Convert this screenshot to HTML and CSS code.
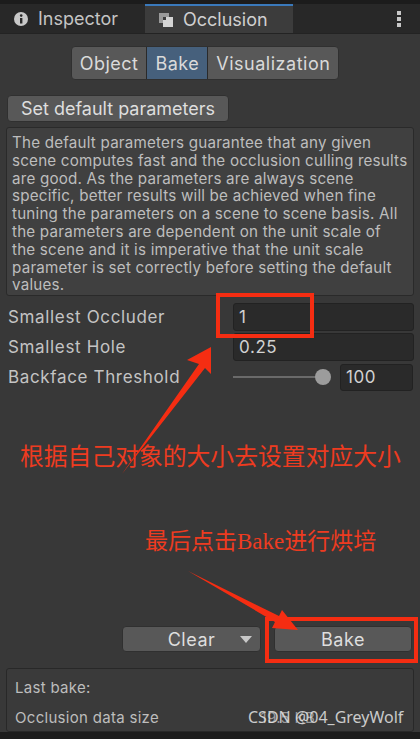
FILE: index.html
```html
<!DOCTYPE html>
<html lang="zh-CN">
<head>
<meta charset="UTF-8">
<meta name="viewport" content="width=device-width, initial-scale=1.0">
<title>Occlusion</title>
<link rel="stylesheet" href="styles.css">
</head>
<body>
<div class="window">
  <div class="tabs">
    <div class="tab">
      <svg class="tab-icon" width="16" height="16" viewBox="0 0 16 16"><circle cx="8" cy="8" r="7" fill="#c8c8c8"/><rect x="7" y="7" width="2.4" height="5.5" fill="#282828"/><circle cx="8.2" cy="4.6" r="1.3" fill="#282828"/></svg>
      <span>Inspector</span>
    </div>
    <div class="tab active">
      <svg class="tab-icon" width="16" height="16" viewBox="0 0 16 16"><rect x="1" y="1" width="10" height="10" fill="#9a9a9a"/><rect x="5" y="5" width="10" height="10" fill="#d4d4d4"/><rect x="5" y="5" width="3" height="3" fill="#3c3c3c"/></svg>
      <span>Occlusion</span>
    </div>
    <div class="tab-menu"><i></i><i></i><i></i></div>
  </div>

  <div class="content">
    <div class="seg">
      <div class="seg-item">Object</div>
      <div class="seg-item on">Bake</div>
      <div class="seg-item">Visualization</div>
    </div>

    <div class="btn default-btn">Set default parameters</div>

    <div class="help">The default parameters guarantee that any given scene computes fast and the occlusion culling results are good. As the parameters are always scene specific, better results will be achieved when fine tuning the parameters on a scene to scene basis. All the parameters are dependent on the unit scale of the scene and it is imperative that the unit scale parameter is set correctly before setting the default values.</div>

    <div class="row">
      <div class="label">Smallest Occluder</div>
      <div class="field">1</div>
    </div>
    <div class="row">
      <div class="label">Smallest Hole</div>
      <div class="field">0.25</div>
    </div>
    <div class="row">
      <div class="label">Backface Threshold</div>
      <div class="slider"><div class="track"></div><div class="thumb"></div></div>
      <div class="field small">100</div>
    </div>

    <div class="spacer"></div>

    <div class="actions">
      <div class="btn clear-btn"><span>Clear</span><span class="caret"></span></div>
      <div class="btn bake-btn">Bake</div>
    </div>

    <div class="stats">
      <div class="stat">Last bake:</div>
      <div class="stat"><span>Occlusion data size</span><span class="stat-val">19.5 KB</span></div>
    </div>
  </div>
  <div class="foot"></div>

  <!-- annotations drawn over the screenshot -->
  <div class="mark mark-field"></div>
  <div class="mark mark-bake"></div>
  <div class="note note-size">根据自己对象的大小去设置对应大小</div>
  <div class="note note-bake">最后点击<span class="serif">Bake</span>进行烘培</div>
  <svg class="arrows" width="420" height="739" viewBox="0 0 420 739">
    <polygon points="122,474 205,368 211,374 211,347 187,360 199,364" fill="#f52d12"/>
    <polygon points="188,571 275,622 272,628 298,630 282,610 279,616" fill="#f52d12"/>
  </svg>
  <div class="watermark">CSDN @04_GreyWolf</div>
</div>
</body>
</html>
```

FILE: styles.css
```css
* {
  box-sizing: border-box;
}
body {
  margin: 0;
  background-color: #383838;
  font-family: Inter, "Noto Sans", sans-serif;
  color: #c4c4c4;
}
.window {
  position: relative;
  width: 420px;
  height: 739px;
  display: flex;
  flex-direction: column;
  overflow: hidden;
}
.tabs {
  display: flex;
  align-items: stretch;
  height: 34px;
  background-color: #282828;
  border-top: 4px solid #1c1c1c;
  border-bottom: 1px solid #232323;
}
.tab {
  display: flex;
  align-items: center;
  gap: 9px;
  padding: 0 12px 0 13px;
  width: 145px;
  font-size: 18px;
  color: #c4c4c4;
}
.tab.active {
  width: 148px;
  background-color: #3c3c3c;
  border-top: 2px solid #3a79bb;
  padding-left: 13px;
  color: #d0d0d0;
}
.tab-icon {
  flex: none;
}
.tab-menu {
  margin-left: auto;
  margin-right: 19px;
  display: flex;
  flex-direction: column;
  justify-content: center;
  gap: 2px;
}
.tab-menu i {
  display: block;
  width: 4px;
  height: 4px;
  background-color: #c8c8c8;
}
.content {
  flex: 1;
  display: flex;
  flex-direction: column;
  padding: 0 6px 0 6px;
}
.seg {
  align-self: center;
  display: flex;
  margin-top: 12px;
  margin-right: 10px;
  height: 34px;
  border-radius: 4px;
  background-color: #585858;
  border: 1px solid #303030;
  overflow: hidden;
}
.seg-item {
  display: flex;
  align-items: center;
  padding: 0 8px;
  font-size: 18px;
  letter-spacing: 0.5px;
  color: #dadada;
}
.seg-item.on {
  background-color: #46607c;
  border-left: 1px solid #2a2a2a;
  border-right: 1px solid #2a2a2a;
}
.btn {
  display: flex;
  align-items: center;
  justify-content: center;
  background-color: #585858;
  border: 1px solid #303030;
  border-radius: 4px;
  color: #dedede;
}
.default-btn {
  align-self: flex-start;
  margin: 15px 0 0 1px;
  width: 222px;
  height: 27px;
  font-size: 18px;
}
.help {
  margin-top: 5px;
  height: 169px;
  padding: 6px 5px;
  background-color: #404040;
  border: 1px solid #2a2a2a;
  border-radius: 3px;
  font-size: 15.2px;
  line-height: 17.8px;
  letter-spacing: 0.2px;
  color: #bdbdbd;
}
.row {
  display: flex;
  align-items: center;
  height: 30px;
}
.help + .row {
  margin-top: 6px;
}
.label {
  width: 227px;
  padding-left: 2px;
  font-size: 17px;
  letter-spacing: 0.65px;
  color: #c4c4c4;
}
.field {
  flex: 1;
  height: 28px;
  display: flex;
  align-items: center;
  padding-left: 5px;
  background-color: #2a2a2a;
  border: 1px solid #222;
  border-radius: 3px;
  font-size: 17px;
  letter-spacing: 0.6px;
  color: #d2d2d2;
}
.field.small {
  flex: none;
  width: 73px;
  height: 27px;
}
.slider {
  position: relative;
  width: 107px;
  height: 28px;
}
.track {
  position: absolute;
  left: 0;
  right: 16px;
  top: 13px;
  height: 2px;
  background-color: #6a6a6a;
}
.thumb {
  position: absolute;
  left: 82px;
  top: 6px;
  width: 16px;
  height: 16px;
  border-radius: 50%;
  background-color: #9c9c9c;
}
.spacer {
  flex: 1;
}
.actions {
  display: flex;
  justify-content: flex-end;
  gap: 13px;
  padding-right: 2px;
}
.clear-btn {
  width: 139px;
  height: 26px;
  font-size: 18px;
  letter-spacing: 0.5px;
  position: relative;
}
.caret {
  position: absolute;
  right: 8px;
  top: 9px;
  width: 0;
  height: 0;
  border-left: 6px solid transparent;
  border-right: 6px solid transparent;
  border-top: 7px solid #c8c8c8;
}
.bake-btn {
  width: 138px;
  height: 26px;
  font-size: 18px;
  letter-spacing: 0.5px;
}
.stats {
  margin-top: 16px;
  height: 64px;
  padding: 6px 8px 2px;
  background-color: #3a3a3a;
  border: 1px solid #282828;
  border-radius: 3px;
  display: flex;
  flex-direction: column;
  justify-content: space-between;
  font-size: 15px;
  letter-spacing: 0.3px;
  color: #bdbdbd;
}
.stat {
  display: flex;
  height: 24px;
  align-items: center;
}
.stat-val {
  margin-left: auto;
  margin-right: 90px;
  color: #9a9a9a;
}
.foot {
  height: 7px;
  background-color: #1c1c1c;
}
.mark {
  position: absolute;
  border: 4px solid #f52d12;
}
.mark-field {
  left: 216px;
  top: 293px;
  width: 98px;
  height: 45px;
}
.mark-bake {
  left: 265px;
  top: 617px;
  width: 153px;
  height: 46px;
}
.note {
  position: absolute;
  color: #ee3b20;
  font-family: "Noto Sans CJK SC", sans-serif;
  white-space: nowrap;
}
.note-size {
  left: 20px;
  top: 440px;
  font-size: 23.8px;
  line-height: 30px;
}
.note-bake {
  left: 145px;
  top: 524px;
  font-size: 23px;
  line-height: 30px;
}
.serif {
  font-family: "Liberation Serif", serif;
}
.arrows {
  position: absolute;
  left: 0;
  top: 0;
  pointer-events: none;
}
.watermark {
  position: absolute;
  left: 248px;
  top: 706px;
  font-size: 16px;
  color: rgba(230, 230, 230, 0.85);
  font-family: "Noto Sans", sans-serif;
}
```
